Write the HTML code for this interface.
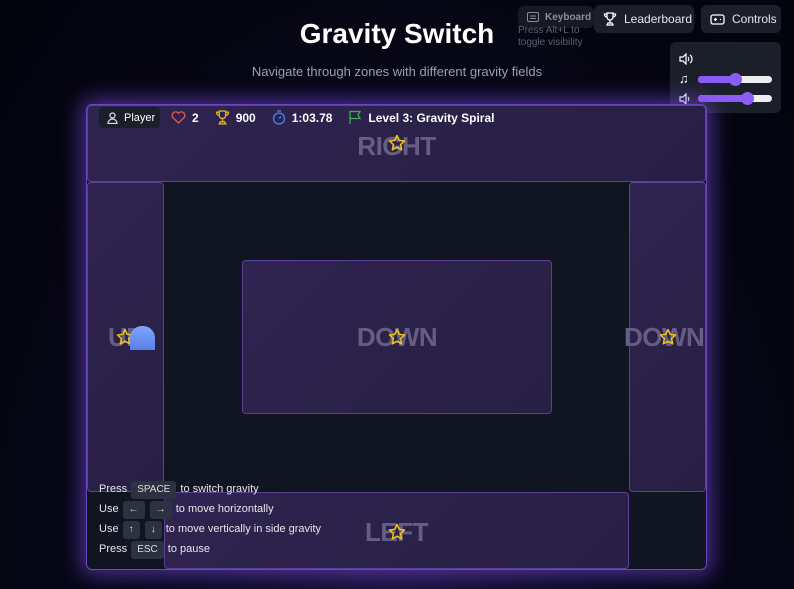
<!DOCTYPE html>
<html><head><style>
*{box-sizing:border-box;margin:0;padding:0}
body{width:794px;height:589px;overflow:hidden;background:radial-gradient(ellipse at 50% 100%,#1a1238 0%,#07071a 45%,#04040c 100%);font-family:"Liberation Sans",sans-serif;color:#fff;position:relative}
svg{flex-shrink:0}
h1{position:absolute;left:0;width:794px;top:18px;text-align:center;font-size:28px;font-weight:bold}
.sub{position:absolute;left:0;width:794px;top:64px;text-align:center;font-size:13px;color:#9aa0b0}
.btn{position:absolute;top:5px;height:28px;background:#1b1f2a;border-radius:6px;font-size:12px;display:flex;align-items:center;gap:7px;padding:0 9px;color:#e5e7eb;white-space:nowrap}
.game{position:absolute;left:86px;top:104px;width:621px;height:466px;background:#111522;border-radius:6px;box-shadow:0 0 20px 5px rgba(130,80,240,.55);border:1px solid #6b46c1}
.z{position:absolute;background:linear-gradient(135deg,#2e2450,#281f44);border:1px solid #5b3f9a;border-radius:4px;display:flex;align-items:center;justify-content:center;font-weight:bold;font-size:26px;color:#665e82;overflow:hidden;letter-spacing:-0.5px}
.star{position:absolute;width:18px;height:18px}
.kbd{display:inline-block;background:#2d3240;border-radius:3px;padding:4px 6px;font-size:10px;color:#ddd;margin:0 1px;line-height:10px}
.ins{position:absolute;left:12px;font-size:11px;color:#e5e7eb;line-height:18px}
.sl{position:absolute;left:28px;width:74px;height:7px;background:#eee;border-radius:4px}
.sl i{position:absolute;left:0;top:0;height:7px;background:#8b5cf6;border-radius:4px}
.sl b{position:absolute;top:-3px;width:13px;height:13px;border-radius:50%;background:#8b5cf6}
</style></head><body>
<h1>Gravity Switch</h1>
<div class="sub">Navigate through zones with different gravity fields</div>
<div class="btn" style="left:518px;top:6px;height:22px;width:76px;color:#8a8f9a;font-size:10px;font-weight:bold;background:#161a24;gap:6px"><svg width="12" height="10" viewBox="0 0 12 10"><rect x=".5" y=".5" width="11" height="9" rx="1.5" fill="none" stroke="#8a8f9a"/><path d="M3 4h6M3 6.5h6" stroke="#8a8f9a"/></svg>Keyboard</div>
<div style="position:absolute;left:518px;top:25px;font-size:10px;color:#5d6270;line-height:12px">Press Alt+L to<br>toggle visibility</div>
<div class="btn" style="left:594px;width:100px"><svg width="14" height="14" viewBox="0 0 14 14" fill="none" stroke="#fff" stroke-width="1.3"><path d="M4 1h6v4a3 3 0 0 1-6 0zM4 2H1.5a2.5 2.5 0 0 0 2.5 3M10 2h2.5A2.5 2.5 0 0 1 10 5M7 8v3M4 13h6l-1-2H5z"/></svg>Leaderboard</div>
<div class="btn" style="left:701px;width:80px"><svg width="15" height="11" viewBox="0 0 15 11" fill="none" stroke="#fff" stroke-width="1.3"><rect x="1" y="1" width="13" height="9" rx="2"/><path d="M4 5.5h3M5.5 4v3M10 5.5h1"/></svg>Controls</div>
<div style="position:absolute;left:670px;top:42px;width:111px;height:71px;background:#1b1f2a;border-radius:6px">
<svg style="position:absolute;left:9px;top:11px" width="14" height="12" viewBox="0 0 14 12" fill="none" stroke="#fff" stroke-width="1.2"><path d="M1 4h3l3-3v10L4 8H1zM9 4a3 3 0 0 1 0 4M11 2a5 5 0 0 1 0 8"/></svg>
<div style="position:absolute;left:9px;top:29px;font-size:13px">♫</div>
<div class="sl" style="top:34px"><i style="width:38px"></i><b style="left:31px"></b></div>
<svg style="position:absolute;left:9px;top:51px" width="14" height="12" viewBox="0 0 14 12" fill="none" stroke="#fff" stroke-width="1.2"><path d="M1 4h3l3-3v10L4 8H1zM9 4a3 3 0 0 1 0 4"/></svg>
<div class="sl" style="top:53px"><i style="width:50px"></i><b style="left:43px"></b></div>
</div>
<div class="game">
<div class="z" style="left:0;top:0;width:619px;height:77px;padding-top:6px">RIGHT</div>
<div class="z" style="left:0;top:77px;width:77px;height:310px;justify-content:flex-start;padding-left:20px">UP</div>
<div class="z" style="left:542px;top:77px;width:77px;height:310px;overflow:visible;justify-content:flex-start"><span style="margin-left:-6px;width:83px;overflow:hidden;white-space:nowrap">DOWN</span></div>
<div class="z" style="left:155px;top:155px;width:310px;height:154px">DOWN</div>
<div class="z" style="left:77px;top:387px;width:465px;height:77px;padding-top:4px">LEFT</div>
<svg class="star" style="left:301px;top:29px" viewBox="0 0 24 24"><path d="M12 2l3 6.5 7 .8-5.2 4.8 1.4 7L12 17.6 5.8 21.1l1.4-7L2 9.3l7-.8z" fill="none" stroke="#f0c419" stroke-width="2" stroke-linejoin="round"/></svg>
<svg class="star" style="left:301px;top:223px" viewBox="0 0 24 24"><path d="M12 2l3 6.5 7 .8-5.2 4.8 1.4 7L12 17.6 5.8 21.1l1.4-7L2 9.3l7-.8z" fill="none" stroke="#f0c419" stroke-width="2" stroke-linejoin="round"/></svg>
<svg class="star" style="left:572px;top:223px" viewBox="0 0 24 24"><path d="M12 2l3 6.5 7 .8-5.2 4.8 1.4 7L12 17.6 5.8 21.1l1.4-7L2 9.3l7-.8z" fill="none" stroke="#f0c419" stroke-width="2" stroke-linejoin="round"/></svg>
<svg class="star" style="left:29px;top:223px" viewBox="0 0 24 24"><path d="M12 2l3 6.5 7 .8-5.2 4.8 1.4 7L12 17.6 5.8 21.1l1.4-7L2 9.3l7-.8z" fill="none" stroke="#f0c419" stroke-width="2" stroke-linejoin="round"/></svg>
<svg class="star" style="left:301px;top:418px" viewBox="0 0 24 24"><path d="M12 2l3 6.5 7 .8-5.2 4.8 1.4 7L12 17.6 5.8 21.1l1.4-7L2 9.3l7-.8z" fill="none" stroke="#f0c419" stroke-width="2" stroke-linejoin="round"/></svg>
<div style="position:absolute;left:43px;top:221px;width:25px;height:24px;border-radius:12px 12px 0 0;background:linear-gradient(#7ea6ff,#5b7fe6)"></div>
<div style="position:absolute;left:12px;top:2px;height:21px;width:61px;background:#1b1f2a;border-radius:4px;font-size:11px;display:flex;align-items:center;gap:6px;padding-left:8px"><svg width="11" height="12" viewBox="0 0 11 12" fill="none" stroke="#ddd" stroke-width="1.2"><circle cx="5.5" cy="3.5" r="2.5"/><path d="M1 11.5a4.5 4.5 0 0 1 9 0z"/></svg>Player</div>
<div style="position:absolute;left:84px;top:3px;font-size:12px;font-weight:bold;display:flex;align-items:center;gap:6px;height:19px">
<svg width="15" height="13" viewBox="0 0 15 13" fill="none" stroke="#e05a4e" stroke-width="1.3"><path d="M7.5 12L1.8 6.5A3.3 3.3 0 0 1 7.5 2.3a3.3 3.3 0 0 1 5.7 4.2z"/></svg>2
<svg style="margin-left:10px" width="15" height="15" viewBox="0 0 14 14" fill="none" stroke="#e0b020" stroke-width="1.3"><path d="M4 1h6v4a3 3 0 0 1-6 0zM4 2H1.5a2.5 2.5 0 0 0 2.5 3M10 2h2.5A2.5 2.5 0 0 1 10 5M7 8v3M4 13h6l-1-2H5z"/></svg>900
<svg style="margin-left:10px" width="14" height="15" viewBox="0 0 14 15" fill="none" stroke="#4a80f0" stroke-width="1.3"><circle cx="7" cy="8.5" r="5.5"/><path d="M5 1h4M7 8.5l2-2"/></svg>1:03.78
<svg style="margin-left:10px" width="14" height="15" viewBox="0 0 14 15" fill="none" stroke="#3fae4f" stroke-width="1.3"><path d="M2 14V1.5h10l-2 3.5 2 3.5H2"/></svg>Level 3: Gravity Spiral</div>
<div class="ins" style="top:375px">Press <span class="kbd">SPACE</span> to switch gravity</div>
<div class="ins" style="top:395px">Use <span class="kbd">←</span> <span class="kbd">→</span> to move horizontally</div>
<div class="ins" style="top:415px">Use <span class="kbd">↑</span> <span class="kbd">↓</span> to move vertically in side gravity</div>
<div class="ins" style="top:435px">Press <span class="kbd">ESC</span> to pause</div>
</div>
</body></html>
